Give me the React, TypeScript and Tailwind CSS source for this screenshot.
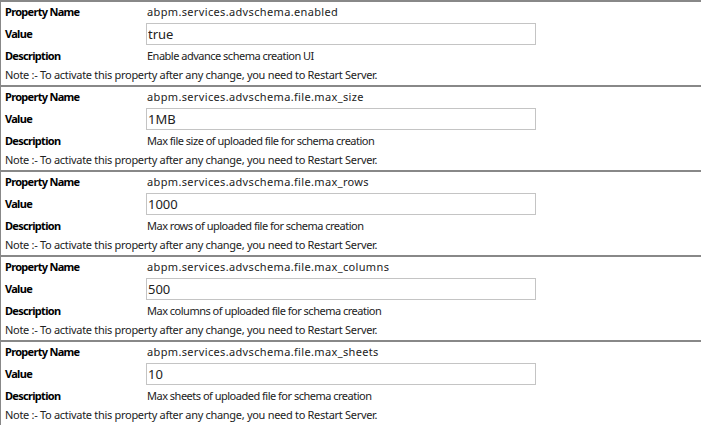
import React from "react"

type Prop = {
    name: string
    value: string
    description: string
}

const props: Prop[] = [
    { name: "abpm.services.advschema.enabled", value: "true", description: "Enable advance schema creation UI" },
    { name: "abpm.services.advschema.file.max_size", value: "1MB", description: "Max file size of uploaded file for schema creation" },
    { name: "abpm.services.advschema.file.max_rows", value: "1000", description: "Max rows of uploaded file for schema creation" },
    { name: "abpm.services.advschema.file.max_columns", value: "500", description: "Max columns of uploaded file for schema creation" },
    { name: "abpm.services.advschema.file.max_sheets", value: "10", description: "Max sheets of uploaded file for schema creation" },
]

function PropertyBlock({ p }: { p: Prop }) {
    return (
        <div className="border-t-2 border-l border-[#888888] pl-[4px] text-[11px] text-[#222]">
            {/* Property name */}
            <div className="flex items-center h-[20px]">
                <div className="w-[142px] font-bold text-black tracking-[-0.7px]">Property Name</div>
                <div className="tracking-[0.35px]">{p.name}</div>
            </div>
            {/* Value */}
            <div className="flex items-center h-[24px]">
                <div className="w-[141px] font-bold text-black tracking-[-0.7px]">Value</div>
                <input
                    defaultValue={p.value}
                    className="w-[390px] h-[22px] border border-[#c4c4c4] pl-[1px] text-[13px] text-[#222] outline-none"
                />
            </div>
            {/* Description */}
            <div className="flex items-center h-[20px]">
                <div className="w-[142px] font-bold text-black tracking-[-0.7px]">Description</div>
                <div className="tracking-[-0.5px]">{p.description}</div>
            </div>
            <div className="flex items-center h-[19px] tracking-[-0.3px]">
                Note :- To activate this property after any change, you need to Restart Server.
            </div>
        </div>
    )
}

export default function App() {
    return (
        <div className="w-[701px] h-[426px] bg-white overflow-hidden" style={{ fontFamily: "'Noto Sans', 'Open Sans', sans-serif" }}>
            {props.map((p) => (
                <PropertyBlock key={p.name} p={p} />
            ))}
        </div>
    )
}
